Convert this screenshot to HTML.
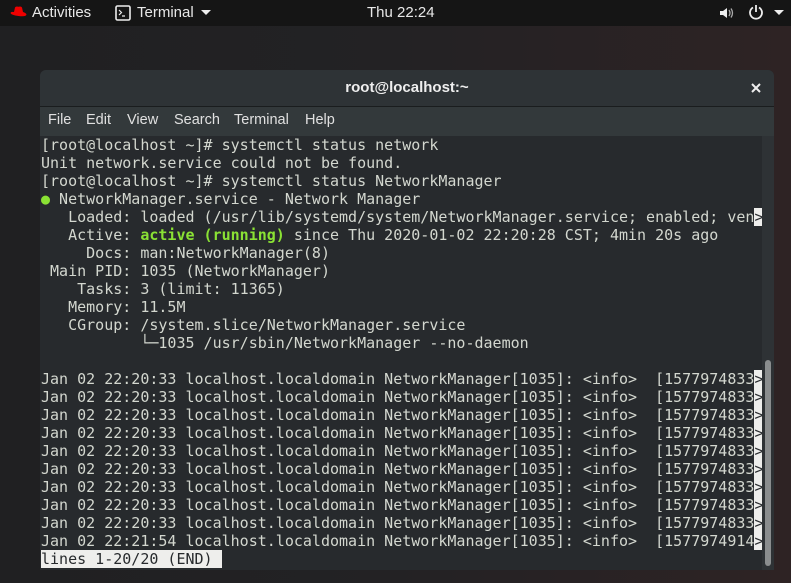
<!DOCTYPE html>
<html><head><meta charset="utf-8"><style>
html,body{margin:0;padding:0;}
body{width:791px;height:583px;overflow:hidden;background:linear-gradient(90deg,#202022 0%,#232224 50%,#2e2324 100%);position:relative;font-family:"Liberation Sans","DejaVu Sans",sans-serif;}
#top{position:absolute;left:0;top:0;width:791px;height:26px;background:#151515;color:#e8e8e8;font-size:15px;}
#top span{position:absolute;top:4px;}
#win{position:absolute;left:40px;top:70px;width:734px;height:500px;background:#272a2d;border-radius:6px 6px 0 0;overflow:hidden;}
#title{height:36px;background:#2e3336;border-bottom:1px solid #1a1d1e;color:#eee;font-size:15px;text-align:center;line-height:36px;font-weight:bold;}
#menu{height:29px;background:#33393b;color:#e0e0e0;font-size:14.5px;}
#menu span{position:absolute;top:42px;}
#term{position:absolute;left:1px;top:66px;font-family:"DejaVu Sans Mono",monospace;font-size:15px;line-height:18px;color:#d3d7cf;white-space:pre;}
.g{color:#8ae234;font-weight:bold;}
.inv{background:#eeeeec;color:#272a2d;}
</style></head><body>
<div id="top">
<svg style="position:absolute;left:10px;top:6px" width="17" height="12" viewBox="0 0 17 12"><path d="M4 6 L5 1.5 Q6 0 8.5 0.8 Q11 0 12 1.5 L13 6 Q16 7 16.5 8.5 Q16 11 8.5 10 Q1 9 0.5 7 Q1 5.5 4 6Z" fill="#e00"/></svg>
<span style="left:32px">Activities</span>
<svg style="position:absolute;left:115px;top:5px" width="16" height="16" viewBox="0 0 16 16"><rect x="1" y="1" width="14" height="14" rx="1.5" fill="none" stroke="#eee" stroke-width="1.6"/><path d="M4 5l2.5 2.5L4 10M7 11h3" stroke="#eee" stroke-width="1.2" fill="none"/></svg>
<span style="left:137px">Terminal</span>
<svg style="position:absolute;left:201px;top:10px" width="10" height="6"><path d="M0 0h10L5 5z" fill="#eee"/></svg>
<span style="left:367px">Thu 22:24</span>
<svg style="position:absolute;left:719px;top:5px" width="16" height="16" viewBox="0 0 16 16"><path d="M1 6h3l4-3v10l-4-3H1z" fill="#eee"/><path d="M10 5q2 3 0 6M12 3.5q3 4.5 0 9" stroke="#aaa" stroke-width="1.3" fill="none"/></svg>
<svg style="position:absolute;left:748px;top:4px" width="16" height="16" viewBox="0 0 16 16"><path d="M5 3.5A6 6 0 1 0 11 3.5" stroke="#eee" stroke-width="1.8" fill="none"/><path d="M8 1v7" stroke="#eee" stroke-width="1.8"/></svg>
<svg style="position:absolute;left:774px;top:10px" width="10" height="6"><path d="M0 0h10L5 5z" fill="#eee"/></svg>
</div>
<div id="win">
<div id="title">root@localhost:~</div>
<svg style="position:absolute;left:711px;top:13px" width="10" height="10"><path d="M1 1l8 8M9 1l-8 8" stroke="#eee" stroke-width="2"/></svg>
<div id="menu"><span style="left:8px">File</span><span style="left:46px">Edit</span><span style="left:87px">View</span><span style="left:134px">Search</span><span style="left:194px">Terminal</span><span style="left:265px">Help</span></div>
<div id="term">[root@localhost ~]# systemctl status network
Unit network.service could not be found.
[root@localhost ~]# systemctl status NetworkManager
<span class="g">●</span> NetworkManager.service - Network Manager
   Loaded: loaded (/usr/lib/systemd/system/NetworkManager.service; enabled; ven<span class="inv">&gt;</span>
   Active: <span class="g">active (running)</span> since Thu 2020-01-02 22:20:28 CST; 4min 20s ago
     Docs: man:NetworkManager(8)
 Main PID: 1035 (NetworkManager)
    Tasks: 3 (limit: 11365)
   Memory: 11.5M
   CGroup: /system.slice/NetworkManager.service
           └─1035 /usr/sbin/NetworkManager --no-daemon

Jan 02 22:20:33 localhost.localdomain NetworkManager[1035]: &lt;info&gt;  [1577974833<span class="inv">&gt;</span>
Jan 02 22:20:33 localhost.localdomain NetworkManager[1035]: &lt;info&gt;  [1577974833<span class="inv">&gt;</span>
Jan 02 22:20:33 localhost.localdomain NetworkManager[1035]: &lt;info&gt;  [1577974833<span class="inv">&gt;</span>
Jan 02 22:20:33 localhost.localdomain NetworkManager[1035]: &lt;info&gt;  [1577974833<span class="inv">&gt;</span>
Jan 02 22:20:33 localhost.localdomain NetworkManager[1035]: &lt;info&gt;  [1577974833<span class="inv">&gt;</span>
Jan 02 22:20:33 localhost.localdomain NetworkManager[1035]: &lt;info&gt;  [1577974833<span class="inv">&gt;</span>
Jan 02 22:20:33 localhost.localdomain NetworkManager[1035]: &lt;info&gt;  [1577974833<span class="inv">&gt;</span>
Jan 02 22:20:33 localhost.localdomain NetworkManager[1035]: &lt;info&gt;  [1577974833<span class="inv">&gt;</span>
Jan 02 22:20:33 localhost.localdomain NetworkManager[1035]: &lt;info&gt;  [1577974833<span class="inv">&gt;</span>
Jan 02 22:21:54 localhost.localdomain NetworkManager[1035]: &lt;info&gt;  [1577974914<span class="inv">&gt;</span>
<span class="inv">lines 1-20/20 (END) </span></div>
<div style="position:absolute;left:722px;top:66px;width:12px;height:434px;background:#2e3235"></div>
<div style="position:absolute;left:725px;top:290px;width:6px;height:206px;background:#8a8d8e;border-radius:3px"></div>
</div>
</body></html>
